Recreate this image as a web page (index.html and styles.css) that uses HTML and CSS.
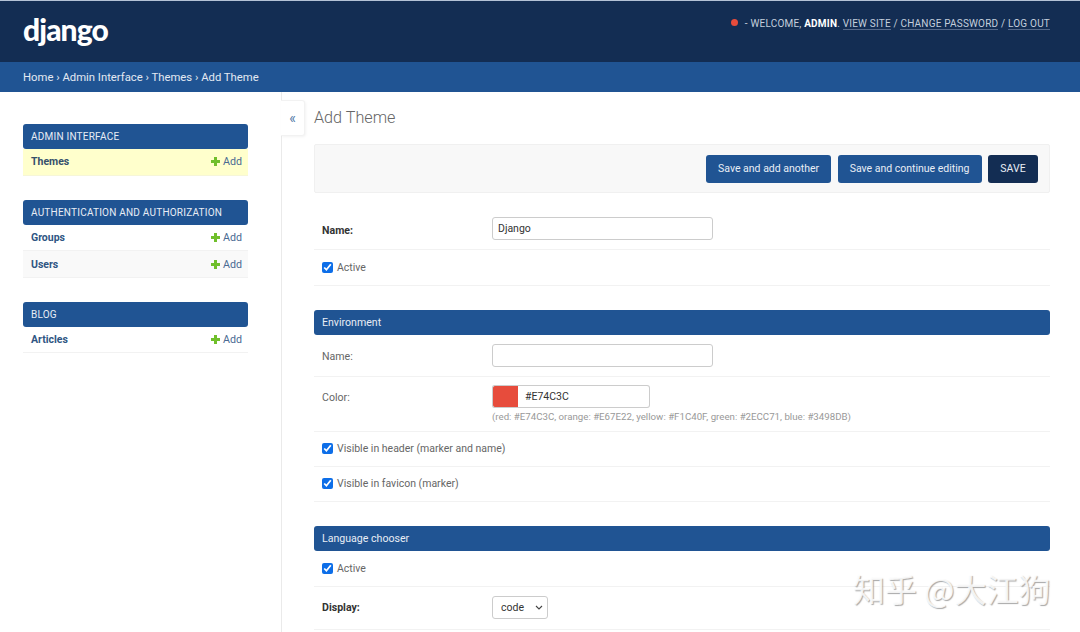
FILE: index.html
```html
<!DOCTYPE html>
<html lang="en">
<head>
<meta charset="utf-8">
<title>Add Theme</title>
<link rel="stylesheet" href="styles.css">
</head>
<body>
<div class="page">
  <header class="header">
    <div class="logo">django</div>
    <div class="tools">
      <span class="marker"></span>
      <span>- WELCOME, <strong>ADMIN</strong>.</span>
      <a href="#">VIEW SITE</a> / <a href="#">CHANGE PASSWORD</a> / <a href="#">LOG OUT</a>
    </div>
  </header>
  <nav class="crumbs">Home › Admin Interface › Themes › Add Theme</nav>
  <div class="main">
    <aside class="sidebar">
      <section class="module">
        <h2 class="caption">ADMIN INTERFACE</h2>
        <div class="app-row current"><b>Themes</b><span class="add"><i class="plus"></i>Add</span></div>
      </section>
      <section class="module">
        <h2 class="caption">AUTHENTICATION AND AUTHORIZATION</h2>
        <div class="app-row"><b>Groups</b><span class="add"><i class="plus"></i>Add</span></div>
        <div class="app-row alt"><b>Users</b><span class="add"><i class="plus"></i>Add</span></div>
      </section>
      <section class="module">
        <h2 class="caption">BLOG</h2>
        <div class="app-row"><b>Articles</b><span class="add"><i class="plus"></i>Add</span></div>
      </section>
    </aside>
    <button class="toggle" type="button">«</button>
    <main class="content">
      <h1 class="title">Add Theme</h1>
      <div class="submit-row">
        <button class="btn" type="button">Save and add another</button>
        <button class="btn" type="button">Save and continue editing</button>
        <button class="btn dark" type="button">SAVE</button>
      </div>
      <div class="fieldset first">
        <div class="row r-name"><label class="lbl req">Name:</label><input class="txt" type="text" value="Django"></div>
        <div class="row r-check tall"><input class="chk" type="checkbox" checked><span class="chk-label">Active</span></div>
      </div>
      <div class="fieldset">
        <h2 class="bar">Environment</h2>
        <div class="row r-env"><label class="lbl">Name:</label><input class="txt" type="text"></div>
        <div class="row r-color">
          <label class="lbl">Color:</label>
          <div>
            <div class="color-field"><span class="swatch"></span><input class="txt hex" type="text" value="#E74C3C"></div>
            <p class="help">(red: #E74C3C, orange: #E67E22, yellow: #F1C40F, green: #2ECC71, blue: #3498DB)</p>
          </div>
        </div>
        <div class="row r-check"><input class="chk" type="checkbox" checked><span class="chk-label">Visible in header (marker and name)</span></div>
        <div class="row r-check"><input class="chk" type="checkbox" checked><span class="chk-label">Visible in favicon (marker)</span></div>
      </div>
      <div class="fieldset">
        <h2 class="bar">Language chooser</h2>
        <div class="row r-check tall"><input class="chk" type="checkbox" checked><span class="chk-label">Active</span></div>
        <div class="row r-display">
          <label class="lbl req">Display:</label>
          <div class="sel-wrap">
            <select class="sel"><option>code</option></select>
            <svg class="chev" width="8" height="5" viewBox="0 0 8 5" aria-hidden="true"><path d="M1 1l3 3 3-3" fill="none" stroke="#444" stroke-width="1.1"/></svg>
          </div>
        </div>
      </div>
    </main>
  </div>
  <div class="watermark">知乎 @大江狗</div>
</div>
</body>
</html>
```
FILE: styles.css
```css
* { box-sizing: border-box; }
html, body { margin: 0; height: 100%; overflow: hidden; }
body { background: #fff; color: #333; font-family: Roboto, "Liberation Sans", sans-serif; font-size: 11px; }
.page { position: relative; height: 632px; overflow: hidden; border-top: 1px solid #b4c2d6; }

.header { height: 61px; background: #132d53; display: flex; justify-content: space-between; padding: 0 30px 0 23px; color: #c9d3e0; }
.logo { font-family: Lato, "Open Sans", sans-serif; font-weight: 900; font-size: 30px; line-height: 57px; letter-spacing: -0.9px; color: #fff; }
.tools { font-size: 10px; letter-spacing: 0.2px; padding-top: 16px; line-height: 13px; color: #c4cfdd; white-space: nowrap; display: block; }
.tools strong { color: #fff; font-weight: 700; }
.tools a { color: #c4cfdd; text-decoration: none; border-bottom: 1px solid #56698a; }
.marker { display: inline-block; width: 7px; height: 7px; border-radius: 50%; background: #e74c3c; margin-right: 4px; vertical-align: 1px; }

.crumbs { height: 30px; background: #205493; color: #e3e9f2; font-size: 11.3px; line-height: 31px; padding-left: 23px; }

.main { display: flex; height: 540px; position: relative; }
.sidebar { width: 282px; flex: none; border-right: 1px solid #eaeaea; padding: 32px 33px 0 23px; }
.module { margin-bottom: 24px; }
.caption { margin: 0; height: 25px; background: #205493; border-radius: 3px; color: #e8edf5; font-size: 10px; font-weight: 400; letter-spacing: 0.22px; line-height: 26px; padding-left: 8px; }
.app-row { height: 26.5px; display: flex; justify-content: space-between; align-items: center; padding: 0 6px 0 8px; border-bottom: 1px solid #f2f2f2; font-size: 10.5px; color: #4a6a92; }
.app-row b { color: #2f5583; font-weight: 700; }
.app-row.alt { background: #f9f9f9; padding-top: 1px; }
.app-row.current { background: #ffffcc; border-bottom-color: #f6f6d8; }
.app-row.current b { color: #35506b; }
.add { display: flex; align-items: center; gap: 3px; font-size: 10.7px; }
.plus { display: block; width: 9px; height: 9px; background:
  linear-gradient(#70bf2b, #70bf2b) center / 9px 3px no-repeat,
  linear-gradient(#70bf2b, #70bf2b) center / 3px 9px no-repeat; }

.toggle { position: absolute; left: 281px; top: 8px; width: 24px; height: 36px; padding: 0; background: #fff; border: 1px solid #f2f2f2; border-left: 0; border-radius: 0 3px 3px 0; box-shadow: 1px 1px 3px rgba(0,0,0,.05); color: #4f76a6; font: 400 14px Roboto, sans-serif; }

.content { flex: 1; padding: 0 30px 0 32px; min-width: 0; }
.title { margin: 0; height: 52px; font-size: 16.2px; font-weight: 300; line-height: 51px; color: #666; }
.submit-row { height: 49px; background: #f8f8f8; border: 1px solid #f0f0f0; border-radius: 2px; display: flex; justify-content: flex-end; align-items: center; gap: 6.5px; padding-right: 11px; margin-bottom: 12px; }
.btn { height: 28px; padding: 0 12px; border: 0; border-radius: 3px; background: #205493; color: #e8edf5; font: 400 10.5px Roboto, sans-serif; }
.btn.dark { background: #132d53; min-width: 50px; }

.fieldset { margin-bottom: 24px; }
.bar { margin: 0; height: 25px; background: #205493; border-radius: 3px; color: #e8edf5; font-size: 10.6px; font-weight: 400; line-height: 26px; padding-left: 8px; }
.row { display: flex; align-items: center; border-bottom: 1px solid #f2f2f2; padding-left: 8px; }
.r-name { height: 45px; padding-top: 3px; }
.r-name .lbl { margin-top: 3px; }
.r-check { height: 35px; padding-bottom: 2px; }
.r-check.tall { height: 36px; padding-bottom: 0; }
.r-env { height: 42px; }
.r-env .lbl { margin-top: 2px; }
.r-color { height: 55px; align-items: flex-start; padding-top: 8px; }
.r-color .lbl { margin-top: 6px; }
.r-display { height: 43px; padding-bottom: 2px; }
.lbl { width: 170px; flex: none; font-size: 10.6px; color: #666; }
.lbl.req { color: #333; font-weight: 700; }
.txt { width: 221px; height: 23px; border: 1px solid #ccc; border-radius: 3px; padding: 0 5px; font: 400 10.5px Roboto, sans-serif; color: #333; background: #fff; outline: 0; }
.color-field { display: flex; width: 158px; height: 23px; }
.swatch { width: 26px; background: #e74c3c; border-radius: 3px 0 0 3px; border: 1px solid #ccc; border-right: 0; flex: none; }
.hex { width: 132px; border-left: 0; border-radius: 0 3px 3px 0; padding-left: 7px; }
.help { margin: 2px 0 0; font-size: 9.7px; line-height: 13px; color: #999; white-space: nowrap; }
.chk { width: 11px; height: 11px; margin: 0 4px 0 0; accent-color: #0d6ee8; }
.chk-label { font-size: 10.5px; color: #666; }
.sel-wrap { position: relative; width: 56px; height: 23px; }
.sel { appearance: none; -webkit-appearance: none; display: block; width: 56px; height: 23px; border: 1px solid #ccc; border-radius: 3px; background: #fff; font: 400 10.5px Roboto, sans-serif; color: #333; padding-left: 8px; }
.chev { position: absolute; right: 5px; top: 9px; pointer-events: none; }

.watermark { position: absolute; left: 853px; top: 570px; font-family: "Noto Sans CJK SC", sans-serif; font-size: 32px; line-height: 34px; white-space: nowrap; color: rgba(255,255,255,.85); text-shadow: 1px 1px 1px rgba(110,110,110,.6); }
```
